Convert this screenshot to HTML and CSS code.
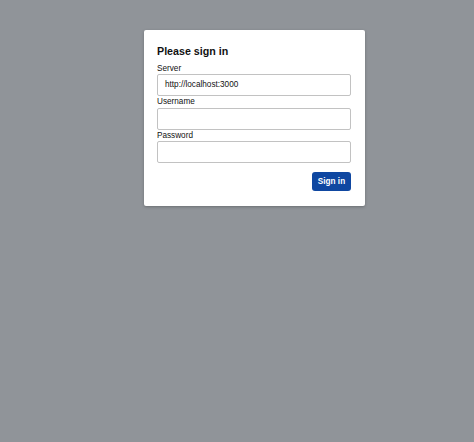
FILE: index.html
```html
<!DOCTYPE html>
<html>
<head>
<meta charset="utf-8">
<link rel="stylesheet" href="styles.css">
</head>
<body>
<div class="page">
  <form class="card">
    <h1 class="title">Please sign in</h1>
    <label class="label">Server</label>
    <div class="input">http://localhost:3000</div>
    <label class="label">Username</label>
    <div class="input"></div>
    <label class="label">Password</label>
    <div class="input"></div>
    <div class="actions">
      <button type="button" class="btn">Sign in</button>
    </div>
  </form>
</div>
</body>
</html>
```
FILE: styles.css
```css
html, body {
  margin: 0;
  padding: 0;
  height: 100%;
  background: #909499;
  font-family: "Liberation Sans", Arial, sans-serif;
}
.page {
  padding: 30px 0 0 144px;
}
.card {
  box-sizing: border-box;
  width: 221px;
  height: 176px;
  background: #fff;
  border-radius: 2px;
  box-shadow: 0 1px 3px rgba(0,0,0,0.25);
  padding: 14.5px 14px 0 13px;
  display: flex;
  flex-direction: column;
}
.title {
  margin: 0 0 6px;
  font-size: 10.7px;
  font-weight: bold;
  color: #111;
  line-height: 12px;
}
.label {
  font-size: 8.2px;
  color: #111;
  line-height: 11.5px;
  height: 11.5px;
}
.input {
  box-sizing: border-box;
  height: 22px;
  border: 1px solid #c2c2c2;
  border-radius: 2px;
  font-size: 8.2px;
  color: #111;
  padding: 0 7px;
  line-height: 20px;
}
.actions {
  display: flex;
  justify-content: flex-end;
  margin-top: 9px;
}
.btn {
  width: 39px;
  height: 19px;
  border: none;
  border-radius: 3px;
  background: #0f47a1;
  color: #fff;
  font-family: "Liberation Sans", Arial, sans-serif;
  font-weight: bold;
  font-size: 8.2px;
  padding: 0;
}
```
